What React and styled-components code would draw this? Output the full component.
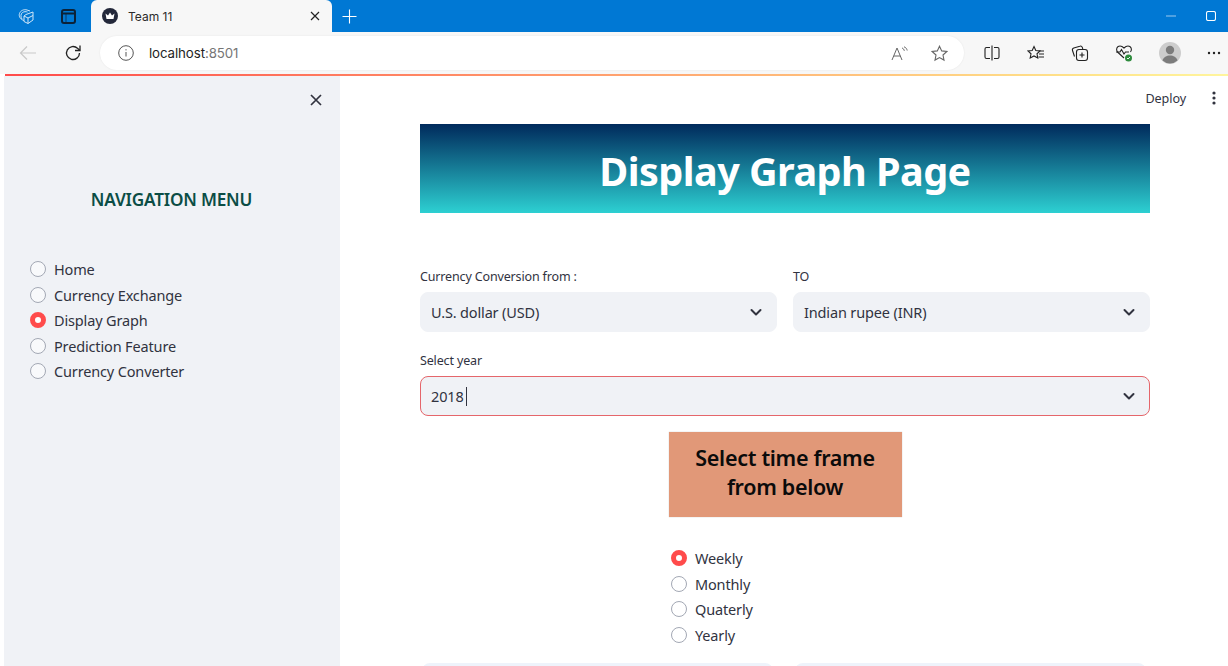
import React from "react";
import styled, { createGlobalStyle } from "styled-components";

const Global = createGlobalStyle`
  html, body { margin: 0; padding: 0; height: 100%; overflow: hidden; background: #fff; }
  #root { height: 666px; }
`;

const Page = styled.div`
  width: 1228px;
  height: 666px;
  display: flex;
  flex-direction: column;
  overflow: hidden;
  font-family: "Noto Sans", "Open Sans", sans-serif;
  color: #31333f;
`;

const TabStrip = styled.div`
  height: 32px;
  flex: none;
  background: #0078d4;
  display: flex;
  align-items: stretch;
`;

const StripIcon = styled.div`
  width: ${(p) => p.$w}px;
  display: flex;
  align-items: center;
  justify-content: center;
  flex: none;
`;

const Tab = styled.div`
  width: 241px;
  flex: none;
  background: #f7f7f7;
  border-radius: 6px 6px 0 0;
  display: flex;
  align-items: center;
  padding: 0 12px 0 11px;
  box-sizing: border-box;
  font: 12px "Inter", "Noto Sans", sans-serif;
  color: #2b2b2b;
`;

const TabTitle = styled.span`
  margin-left: 10px;
  flex: 1;
`;

const Spacer = styled.div`
  flex: 1;
`;

const Toolbar = styled.div`
  height: 42px;
  flex: none;
  background: #f7f7f7;
  display: flex;
  align-items: center;
`;

const ToolSlot = styled.div`
  width: ${(p) => p.$w}px;
  flex: none;
  display: flex;
  align-items: center;
  justify-content: center;
`;

const Address = styled.div`
  width: 864px;
  height: 34px;
  margin-left: 10px;
  flex: none;
  background: #fff;
  border-radius: 17px;
  box-shadow: 0 0 2px rgba(0, 0, 0, 0.08);
  display: flex;
  align-items: center;
  padding: 0 16px 0 18px;
  box-sizing: border-box;
`;

const Url = styled.span`
  margin-left: 15px;
  flex: 1;
  font: 13.3px "Inter", "Noto Sans", sans-serif;
  letter-spacing: -0.1px;
  color: #1f1f1f;
`;

const Port = styled.span`
  color: #767676;
`;

const AddressIcons = styled.div`
  display: flex;
  gap: 23px;
  align-items: center;
`;

const ColorLine = styled.div`
  height: 2px;
  flex: none;
  margin-left: 5px;
  background: linear-gradient(90deg, #ff4b4b, #ffe38a 88%, #fff59d);
`;

const Body = styled.div`
  flex: 1;
  display: flex;
  min-height: 0;
`;

const Sidebar = styled.aside`
  width: 336px;
  margin-left: 4px;
  flex: none;
  background: #f0f2f6;
  display: flex;
  flex-direction: column;
`;

const CloseRow = styled.div`
  display: flex;
  justify-content: flex-end;
  padding: 17px 17px 0 0;
`;

const NavTitle = styled.h2`
  margin: 81px 0 0;
  padding-right: 1px;
  text-align: center;
  font-size: 17.2px;
  line-height: 24px;
  font-weight: 600;
  color: #0b4d45;
  letter-spacing: -0.2px;
`;

const RadioGroup = styled.div`
  display: flex;
  flex-direction: column;
  gap: 3.5px;
  margin: ${(p) => p.$margin};
`;

const RadioRow = styled.div`
  display: flex;
  align-items: center;
  height: 22px;
  gap: 8px;
  font-size: 14.5px;
  letter-spacing: -0.15px;
  color: #31333f;
`;

const RadioDot = styled.span`
  width: 16px;
  height: 16px;
  flex: none;
  border-radius: 50%;
  box-sizing: border-box;
  background: ${(p) => (p.$on ? "#fff" : p.$fill)};
  border: ${(p) => (p.$on ? "5px solid #ff4b4b" : "1px solid #a3a8b4")};
`;

const Main = styled.main`
  flex: 1;
  display: flex;
  flex-direction: column;
  min-width: 0;
`;

const AppHeader = styled.div`
  height: 48px;
  flex: none;
  box-sizing: border-box;
  display: flex;
  align-items: center;
  justify-content: flex-end;
  padding: 0 12px 4px 0;
  font-size: 12.6px;
  letter-spacing: -0.1px;
  gap: 26px;
`;

const Content = styled.div`
  width: 730px;
  margin-left: 80px;
  display: flex;
  flex-direction: column;
`;

const Banner = styled.div`
  height: 89px;
  box-sizing: border-box;
  padding-top: 4px;
  background: linear-gradient(180deg, #002a5c, #2dd0d2);
  display: flex;
  align-items: center;
  justify-content: center;
  color: #fff;
  font-size: 39.6px;
  font-weight: 700;
  letter-spacing: -0.55px;
`;

const FieldRow = styled.div`
  display: flex;
  gap: 16px;
  margin-top: ${(p) => p.$top}px;
`;

const Field = styled.div`
  flex: ${(p) => p.$flex};
  min-width: 0;
  display: flex;
  flex-direction: column;
`;

const Label = styled.label`
  font-size: 12.5px;
  line-height: 16px;
  letter-spacing: -0.15px;
  margin-bottom: 7px;
  color: #31333f;
`;

const Select = styled.div`
  height: 40px;
  box-sizing: border-box;
  background: #f0f2f6;
  border-radius: 8px;
  border: 1px solid ${(p) => (p.$focus ? "#e5666b" : "#f0f2f6")};
  display: flex;
  align-items: center;
  justify-content: space-between;
  padding: 0 12px 0 10px;
  font-size: 14.5px;
  letter-spacing: -0.15px;
`;

const Caret = styled.span`
  width: 1px;
  height: 19px;
  margin-left: 2px;
  background: #31333f;
`;

const SelectValue = styled.span`
  display: flex;
  align-items: center;
`;

const Callout = styled.div`
  width: 233px;
  height: 85px;
  box-sizing: border-box;
  padding-bottom: 5px;
  margin: 16px auto 0;
  background: #e19878;
  box-shadow: 0 0 1px rgba(0, 0, 0, 0.25);
  display: flex;
  align-items: center;
  justify-content: center;
  text-align: center;
  color: #0b0b0b;
  font-size: 21.5px;
  line-height: 29px;
  font-weight: 600;
  letter-spacing: -0.3px;
`;

const ButtonRow = styled.div`
  display: flex;
  gap: 22px;
  margin: 17px 4px 0 2px;
`;

const ButtonTop = styled.div`
  flex: 1;
  height: 8px;
  background: #eef3fb;
  border-radius: 8px 8px 0 0;
`;

const Chevron = () => (
  <svg width="16" height="16" viewBox="0 0 16 16" fill="none" stroke="#31333f" strokeWidth="2" strokeLinecap="round" strokeLinejoin="round">
    <path d="M3.5 6l4.5 4.5L12.5 6" />
  </svg>
);

const Radios = ({ items, selected, fill, margin }) => (
  <RadioGroup $margin={margin}>
    {items.map((item) => (
      <RadioRow key={item}>
        <RadioDot $on={item === selected} $fill={fill} />
        {item}
      </RadioRow>
    ))}
  </RadioGroup>
);

const App = () => {
  return (
    <Page>
      <Global />
      <TabStrip>
        <StripIcon $w={52}>
          <svg width="18" height="18" viewBox="0 0 18 18" fill="none" stroke="#cfe6f8" strokeWidth="1">
            <path d="M9 7.5l7-2.5v8l-5 3.5-4-2V9z" />
            <path d="M7 9l4 2v5.5M11 11l5-2.5" />
            <path d="M7 13.5C3.5 12.5 1.5 9.5 2.5 6.5 3.5 3.5 7 2 10 3l3 1" />
            <path d="M5 12C3.5 10 3.5 7 5.5 5.5 7 4.500 9 4.500 10.500 5" />
          </svg>
        </StripIcon>
        <StripIcon $w={32}>
          <svg width="15" height="15" viewBox="0 0 15 15" fill="none" stroke="#0b2239" strokeWidth="2">
            <rect x="1" y="1" width="13" height="13" rx="2" />
            <path d="M1 4.500h13" />
            <path d="M5 4.500v9.500" strokeWidth="0.700" />
          </svg>
        </StripIcon>
        <StripIcon $w={7} />
        <Tab>
          <svg width="16" height="16" viewBox="0 0 16 16">
            <circle cx="8" cy="8" r="8" fill="#23283a" />
            <path d="M3.500 5.500l2.500 2 2-3 2 3 2.500-2-1 5.500h-7z" fill="#fff" />
          </svg>
          <TabTitle>Team 11</TabTitle>
          <svg width="10" height="10" viewBox="0 0 10 10" stroke="#222" strokeWidth="1.2">
            <path d="M1 1l8 8M9 1l-8 8" />
          </svg>
        </Tab>
        <StripIcon $w={34}>
          <svg width="15" height="15" viewBox="0 0 15 15" stroke="#fff" strokeWidth="1.1">
            <path d="M7.500 0.500v14M0.500 7.500h14" />
          </svg>
        </StripIcon>
        <Spacer />
        <StripIcon $w={46}>
          <svg width="10" height="2" viewBox="0 0 10 2" stroke="#9cc9ee" strokeWidth="1">
            <path d="M0 1h10" />
          </svg>
        </StripIcon>
        <StripIcon $w={34}>
          <svg width="10" height="10" viewBox="0 0 10 10" fill="none" stroke="#fff" strokeWidth="1.1">
            <rect x="0.500" y="0.500" width="9" height="9" rx="1.800" />
          </svg>
        </StripIcon>
      </TabStrip>

      <Toolbar>
        <ToolSlot $w={55}>
          <svg width="18" height="16" viewBox="0 0 18 16" fill="none" stroke="#c9c9c9" strokeWidth="1.200">
            <path d="M17 8H1.500M8 1.500L1.500 8 8 14.500" />
          </svg>
        </ToolSlot>
        <ToolSlot $w={35}>
          <svg width="18" height="18" viewBox="0 0 18 18" fill="none" stroke="#222" strokeWidth="1.300">
            <path d="M15.500 9a6.500 6.500 0 1 1-2-4.700L16 6.500" />
            <path d="M16 1.500v5h-5" />
          </svg>
        </ToolSlot>
        <Address>
          <svg width="16" height="16" viewBox="0 0 16 16" fill="none" stroke="#555" strokeWidth="1">
            <circle cx="8" cy="8" r="7.300" />
            <path d="M8 7v4.500M8 4.200v1.200" />
          </svg>
          <Url>
            localhost<Port>:8501</Port>
          </Url>
          <AddressIcons>
            <svg width="17" height="15" viewBox="0 0 17 15" fill="none" stroke="#666" strokeWidth="1">
              <path d="M1 14L6 2l5 12M2.800 10h6.400" />
              <path d="M11 2c1.500.5 2 1.500 2.300 2.800M13 0.800c2 .7 2.800 2 3.200 3.700" />
            </svg>
            <svg width="17" height="17" viewBox="0 0 17 17" fill="none" stroke="#666" strokeWidth="1.100">
              <path d="M8.500 1.200l2.200 4.700 5.100.6-3.800 3.500 1 5.100-4.500-2.500L4 15.100l1-5.100L1.200 6.500l5.100-.6z" />
            </svg>
          </AddressIcons>
        </Address>
        <ToolSlot $w={56}>
          <svg width="16" height="16" viewBox="0 0 16 16" fill="none" stroke="#222" strokeWidth="1.100">
            <path d="M6 2.500H2.500a1.500 1.500 0 0 0-1.500 1.500v8a1.500 1.500 0 0 0 1.500 1.500H6M10 2.500h3.500A1.500 1.500 0 0 1 15 4v8a1.500 1.500 0 0 1-1.500 1.500H10M8 0.500v15" />
          </svg>
        </ToolSlot>
        <ToolSlot $w={32}>
          <svg width="18" height="17" viewBox="0 0 18 17" fill="none" stroke="#222" strokeWidth="1.100">
            <path d="M7 1.500l1.800 4 4.200.5-3 2.800.8 4.200L7 10.900 3.200 13l.8-4.200-3-2.800 4.200-.5z" />
            <path d="M12 6h5M12 9h5M11.500 12h5.500" />
          </svg>
        </ToolSlot>
        <ToolSlot $w={56}>
          <svg width="18" height="18" viewBox="0 0 18 18" fill="none" stroke="#222" strokeWidth="1.100">
            <rect x="5.500" y="5.500" width="11" height="11" rx="2.500" />
            <path d="M11 8.500v5M8.500 11h5" />
            <path d="M3.500 12.500L1.500 6.500a2 2 0 0 1 1.300-2.500l6-1.800a2 2 0 0 1 2.500 1.200l.5 1.600" />
          </svg>
        </ToolSlot>
        <ToolSlot $w={32}>
          <svg width="18" height="18" viewBox="0 0 18 18" fill="none">
            <path d="M9 14L2.500 8C.5 5.500 2 2 5 2c1.800 0 3 1 4 2 1-1 2.200-2 4-2 3 0 4.500 3.500 2.500 6" stroke="#222" strokeWidth="1.100" />
            <path d="M1 8h4l1.500-2.500L9 10l1.500-2H14" stroke="#222" strokeWidth="1.100" />
            <circle cx="13.500" cy="14" r="3.500" fill="#2e8b3d" />
            <path d="M12 14l1 1 2-2" stroke="#fff" strokeWidth="0.900" />
          </svg>
        </ToolSlot>
        <ToolSlot $w={60}>
          <svg width="22" height="22" viewBox="0 0 22 22">
            <circle cx="11" cy="11" r="11" fill="#cdcdcd" />
            <circle cx="11" cy="8" r="4.200" fill="#7c7c7c" />
            <path d="M3.500 18.500C4.500 15 7.500 13.500 11 13.500s6.500 1.500 7.500 5a11 11 0 0 1-15 0z" fill="#7c7c7c" />
          </svg>
        </ToolSlot>
        <ToolSlot $w={28}>
          <svg width="14" height="4" viewBox="0 0 14 4" fill="#222">
            <circle cx="2" cy="2" r="1.200" />
            <circle cx="7" cy="2" r="1.200" />
            <circle cx="12" cy="2" r="1.200" />
          </svg>
        </ToolSlot>
      </Toolbar>
      <ColorLine />

      <Body>
        <Sidebar>
          <CloseRow>
            <svg width="14" height="14" viewBox="0 0 14 14" stroke="#31333f" strokeWidth="1.700">
              <path d="M2 2l10 10M12 2L2 12" />
            </svg>
          </CloseRow>
          <NavTitle>NAVIGATION MENU</NavTitle>
          <Radios
            items={["Home", "Currency Exchange", "Display Graph", "Prediction Feature", "Currency Converter"]}
            selected="Display Graph"
            fill="#f8f9fb"
            margin="46px 0 0 26px"
          />
        </Sidebar>
        <Main>
          <AppHeader>
            <span>Deploy</span>
            <svg width="4" height="14" viewBox="0 0 4 14" fill="#31333f">
              <circle cx="2" cy="2" r="1.600" />
              <circle cx="2" cy="7" r="1.600" />
              <circle cx="2" cy="12" r="1.600" />
            </svg>
          </AppHeader>
          <Content>
            <Banner>Display Graph Page</Banner>
            <FieldRow $top={56}>
              <Field $flex={357}>
                <Label>Currency Conversion from :</Label>
                <Select>
                  U.S. dollar (USD)
                  <Chevron />
                </Select>
              </Field>
              <Field $flex={357}>
                <Label>TO</Label>
                <Select>
                  Indian rupee (INR)
                  <Chevron />
                </Select>
              </Field>
            </FieldRow>
            <FieldRow $top={21}>
              <Field $flex={1}>
                <Label>Select year</Label>
                <Select $focus>
                  <SelectValue>
                    2018
                    <Caret />
                  </SelectValue>
                  <Chevron />
                </Select>
              </Field>
            </FieldRow>
            <Callout>
              Select time frame
              <br />
              from below
            </Callout>
            <Radios
              items={["Weekly", "Monthly", "Quaterly", "Yearly"]}
              selected="Weekly"
              fill="#fff"
              margin="30px 0 0 251px"
            />
            <ButtonRow>
              <ButtonTop />
              <ButtonTop />
            </ButtonRow>
          </Content>
        </Main>
      </Body>
    </Page>
  );
};

export default App;
